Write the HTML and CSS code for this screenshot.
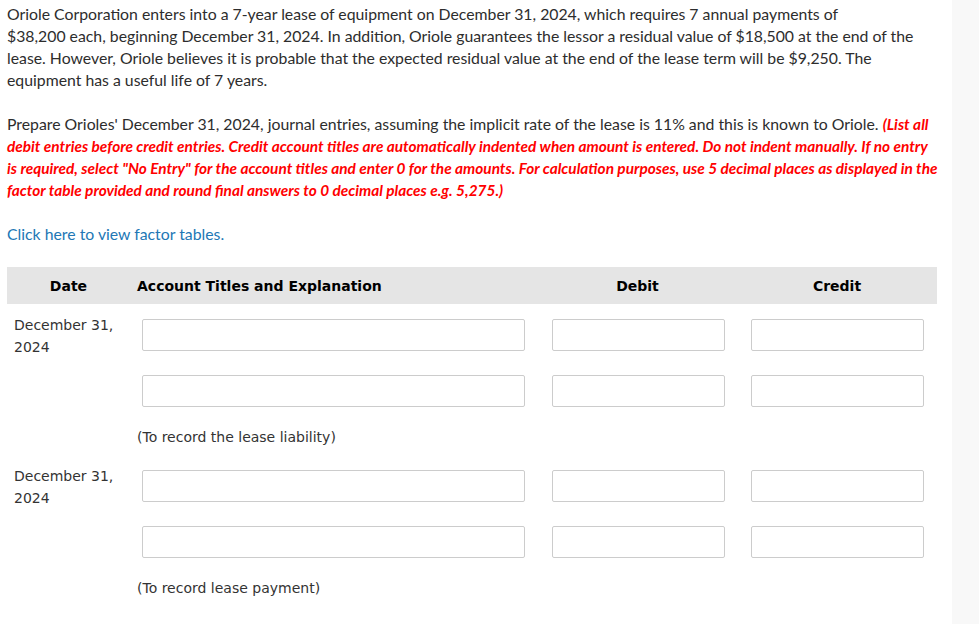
FILE: index.html
```html
<!DOCTYPE html>
<html>
<head>
<meta charset="utf-8">
<link rel="stylesheet" href="styles.css">
</head>
<body>
<div class="page">
  <main class="main">
    <p class="prose">Oriole Corporation enters into a 7-year lease of equipment on December 31, 2024, which requires 7 annual payments of<br>$38,200 each, beginning December 31, 2024. In addition, Oriole guarantees the lessor a residual value of $18,500 at the end of the<br>lease. However, Oriole believes it is probable that the expected residual value at the end of the lease term will be $9,250. The<br>equipment has a useful life of 7 years.</p>
    <p class="prose">Prepare Orioles' December 31, 2024, journal entries, assuming the implicit rate of the lease is 11% and this is known to Oriole. <em class="warn">(List all<br>debit entries before credit entries. Credit account titles are automatically indented when amount is entered. Do not indent manually. If no entry<br>is required, select "No Entry" for the account titles and enter 0 for the amounts. For calculation purposes, use 5 decimal places as displayed in the<br>factor table provided and round final answers to 0 decimal places e.g. 5,275.)</em></p>
    <p class="prose"><a class="link" href="#">Click here to view factor tables.</a></p>

    <div class="journal">
      <div class="head">
        <div class="h-date">Date</div>
        <div class="h-acct">Account Titles and Explanation</div>
        <div class="h-num">Debit</div>
        <div class="h-num">Credit</div>
      </div>

      <div class="row">
        <div class="date">December 31,<br>2024</div>
        <div class="cell acct"><input class="box" type="text"></div>
        <div class="cell num"><input class="box" type="text"></div>
        <div class="cell num"><input class="box" type="text"></div>
      </div>
      <div class="row">
        <div class="date"></div>
        <div class="cell acct"><input class="box" type="text"></div>
        <div class="cell num"><input class="box" type="text"></div>
        <div class="cell num"><input class="box" type="text"></div>
      </div>
      <div class="expl">(To record the lease liability)</div>

      <div class="row">
        <div class="date">December 31,<br>2024</div>
        <div class="cell acct"><input class="box" type="text"></div>
        <div class="cell num"><input class="box" type="text"></div>
        <div class="cell num"><input class="box" type="text"></div>
      </div>
      <div class="row">
        <div class="date"></div>
        <div class="cell acct"><input class="box" type="text"></div>
        <div class="cell num"><input class="box" type="text"></div>
        <div class="cell num"><input class="box" type="text"></div>
      </div>
      <div class="expl">(To record lease payment)</div>
    </div>
  </main>
  <aside class="side"></aside>
</div>
</body>
</html>
```

FILE: styles.css
```css
html, body {
  margin: 0;
  padding: 0;
  background: #ffffff;
}

.page {
  display: flex;
  width: 979px;
  height: 624px;
  overflow: hidden;
}

.main {
  width: 952px;
  flex: none;
  padding: 3px 0 0 7px;
  box-sizing: border-box;
}

.side {
  flex: 1;
  background: #f8f8f8;
}

.prose {
  margin: 0 0 22px 0;
  font-family: Lato, "Open Sans", sans-serif;
  font-size: 15.8px;
  line-height: 22px;
  color: #2d2d2d;
  white-space: nowrap;
}

.warn {
  color: #ff0000;
  font-weight: bold;
  font-style: italic;
  font-size: 15.4px;
}

.link {
  color: #2277b5;
  text-decoration: none;
}

.journal {
  width: 930px;
  margin-top: 11px;
  font-family: "DejaVu Sans", sans-serif;
  font-size: 14px;
  color: #333333;
}

.head {
  display: grid;
  grid-template-columns: 123px 408px 199px 200px;
  height: 37px;
  align-items: center;
  background: #e5e5e5;
  font-weight: bold;
  color: #000000;
  padding-top: 1px;
  box-sizing: border-box;
}

.h-date,
.h-num {
  text-align: center;
}

.h-acct {
  padding-left: 7px;
}

.row {
  display: grid;
  grid-template-columns: 123px 408px 199px 200px;
  height: 56px;
  align-items: start;
}

.head + .row {
  margin-top: 9px;
}

.date {
  padding-left: 7px;
  padding-top: 1px;
  line-height: 22px;
}

.cell {
  padding-top: 6px;
}

.acct {
  padding-left: 12px;
}

.num {
  padding-left: 14px;
}

.box {
  display: block;
  box-sizing: border-box;
  height: 32px;
  margin: 0;
  border: 1px solid #cccccc;
  border-radius: 2px;
  background: #ffffff;
  padding: 0 6px;
  font: inherit;
}

.acct .box {
  width: 383px;
}

.num .box {
  width: 173px;
}

.expl {
  padding-left: 130px;
  padding-top: 1px;
  height: 38px;
  line-height: 22px;
}
```
